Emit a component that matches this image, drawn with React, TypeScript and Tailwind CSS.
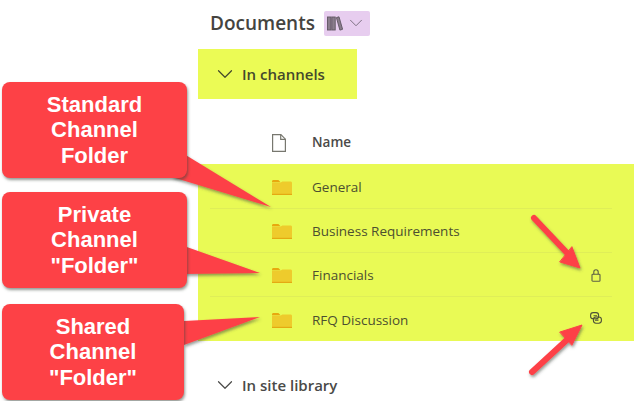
import { ChevronDown } from "lucide-react"

const rows = [
  { name: "General", icon: null },
  { name: "Business Requirements", icon: null },
  { name: "Financials", icon: "lock" },
  { name: "RFQ Discussion", icon: "shared" },
]

function Folder() {
  return (
    <svg width="20" height="15" viewBox="0 0 20 15" className="shrink-0">
      <path d="M0 1.5C0 .7.6 0 1.4 0h5l2.2 2.2H0z" fill="#e8a80f" />
      <path d="M0 2.5h8.6L10.4 1.6h8.2c.8 0 1.4.6 1.4 1.4v10.6c0 .8-.6 1.4-1.4 1.4H1.4C.6 15 0 14.4 0 13.6z" fill="#eecb2c" />
      <rect x="0" y="13.8" width="20" height="1.2" fill="#e5a912" />
    </svg>
  )
}

function DocIcon() {
  return (
    <svg width="16" height="18" viewBox="0 0 16 18" fill="none" stroke="#77776f" strokeWidth="1.2">
      <path d="M1.6.7h8.3l4.5 4.5v12.1H1.6z" />
      <path d="M9.7.7v4.6h4.7" />
    </svg>
  )
}

function LibraryIcon() {
  return (
    <svg width="16" height="15" viewBox="0 0 16 15" fill="#8a7d8c" stroke="#5f5562" strokeWidth="0.9">
      <rect x="0.5" y="1" width="3.4" height="13" />
      <rect x="4.8" y="1" width="3.4" height="13" />
      <path d="M9.4 1.6l2.6-.8 3.6 12.5-2.7.8z" />
    </svg>
  )
}

function LockIcon() {
  return (
    <svg width="10" height="13" viewBox="0 0 10 13" fill="none" stroke="#5c5f45" strokeWidth="1.1">
      <rect x="1" y="5.2" width="8" height="7" rx="0.8" />
      <path d="M2.8 5.2V3a2.2 2.2 0 0 1 4.4 0v2.2" />
    </svg>
  )
}

function SharedIcon() {
  return (
    <svg width="12" height="12" viewBox="0 0 12 12" fill="none" stroke="#4f5238" strokeWidth="1.1" className="-mt-[4px]">
      <rect x="0.6" y="0.6" width="8" height="6.2" rx="2.6" />
      <rect x="3.4" y="5" width="8" height="6.2" rx="2.6" />
      <path d="M3.5 3.7h3.6M4.9 8.1h3.6" />
    </svg>
  )
}

function Callout({ lines, className }: { lines: string[]; className: string }) {
  return (
    <div
      className={`absolute left-[2px] flex h-[96px] flex-col items-center justify-center rounded-[8px] bg-[#fd4146] text-center font-['Liberation_Sans',sans-serif] text-[22px] leading-[25.5px] font-bold text-white shadow-[1px_2px_3px_rgba(60,70,60,0.55)] ${className}`}
    >
      {lines.map((line) => (
        <div key={line}>{line}</div>
      ))}
    </div>
  )
}

export default function App() {
  return (
    <div className="relative h-[401px] w-[634px] overflow-hidden bg-white font-['Open_Sans',sans-serif] text-[#3b3a39]">
      <div className="ml-[198px] flex flex-col">
        <div className="flex h-[49px] items-center pb-[3px] pl-[12px]">
          <span className="text-[19px] font-semibold text-[#45443f]">Documents</span>
          <div className="ml-[9px] flex h-[25px] w-[46px] items-center justify-center gap-[2px] rounded-[2px] bg-[#e7cdef]">
            <LibraryIcon />
            <ChevronDown className="h-[22px] w-[22px] text-[#75697a]" strokeWidth={1} />
          </div>
        </div>

        <div className="flex h-[50px] w-[159px] items-center gap-[4px] bg-[#ebfb55] pl-[14px] text-[15px] font-semibold text-[#44482c]">
          <ChevronDown className="h-[26px] w-[26px] text-[#44482c]" strokeWidth={1.1} />
          In channels
        </div>

        <div className="flex h-[65px] items-end pb-[12px] pl-[73px]">
          <DocIcon />
          <span className="ml-[25px] text-[13.5px] font-semibold text-[#4a4a48]">Name</span>
        </div>

        <div className="flex h-[177px] flex-col bg-[#e9fa55] pt-[1px] pl-[12px]">
          {rows.map((row, i) => (
            <div
              key={row.name}
              className={`flex h-[44px] w-[402px] shrink-0 items-center pt-[2px] pl-[62px] ${i < 3 ? "border-b border-[#dfee58]" : ""}`}
            >
              <Folder />
              <span className="ml-[20px] text-[13.5px] text-[#4c4f30]">{row.name}</span>
              <span className="mr-[10px] ml-auto flex w-[13px] justify-center">
                {row.icon === "lock" && <LockIcon />}
                {row.icon === "shared" && <SharedIcon />}
              </span>
            </div>
          ))}
        </div>

        <div className="flex h-[60px] items-center gap-[4px] pt-[28px] pl-[14px] text-[15px] font-semibold text-[#4a4a48]">
          <ChevronDown className="h-[26px] w-[26px]" strokeWidth={1.1} />
          In site library
        </div>
      </div>

      {/* callout tails and red arrows */}
      <svg width="634" height="401" viewBox="0 0 634 401" className="absolute top-0 left-0">
        <defs>
          <filter id="sh" x="-20%" y="-20%" width="140%" height="140%">
            <feDropShadow dx="1" dy="2" stdDeviation="1.5" floodColor="#3c463c" floodOpacity="0.55" />
          </filter>
        </defs>
        <g fill="#fd4146" filter="url(#sh)">
          <path d="M184 154L271 207L172 177z" />
          <path d="M184 246L260 273L184 274z" />
          <path d="M184 321L260 317L184 345z" />
          <g stroke="#fd4146" strokeLinecap="round" strokeLinejoin="round">
            <path d="M534 218L569 255" fill="none" strokeWidth="6" />
            <path d="M572 247L580 268L560 262z" strokeWidth="1" />
            <path d="M532 372L570 337" fill="none" strokeWidth="6" />
            <path d="M560 332L582 325L572 345z" strokeWidth="1" />
          </g>
        </g>
      </svg>

      <Callout lines={["Standard", "Channel", "Folder"]} className="top-[82px] w-[185px]" />
      <Callout lines={["Private", "Channel", '"Folder"']} className="top-[192px] w-[185px]" />
      <Callout lines={["Shared", "Channel", '"Folder"']} className="top-[304px] w-[182px]" />
    </div>
  )
}
